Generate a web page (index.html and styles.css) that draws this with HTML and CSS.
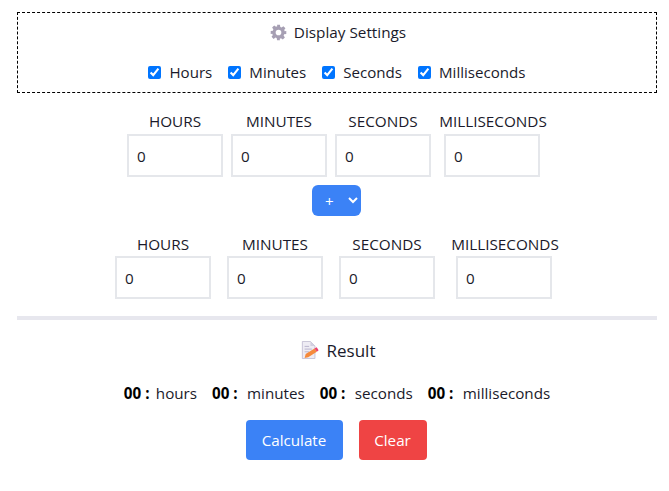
FILE: index.html
```html
<!DOCTYPE html>
<html lang="en">
<head>
<meta charset="utf-8">
<title>Time Calculator</title>
<link rel="stylesheet" href="styles.css">
</head>
<body>
<main class="page">
  <section class="settings">
    <h2 class="settings-title">
      <svg class="gear" viewBox="0 0 24 24" aria-hidden="true"><path fill="#a69fb3" fill-rule="evenodd" d="M10 1h4l.6 3.1c.6.2 1.2.4 1.7.7l2.6-1.8 2.9 2.9-1.8 2.6c.3.5.6 1.1.7 1.7L23 10v4l-3.1.6c-.2.6-.4 1.2-.7 1.7l1.8 2.6-2.9 2.9-2.6-1.8c-.5.3-1.1.6-1.7.7L14 23h-4l-.6-3.1c-.6-.2-1.2-.4-1.7-.7l-2.6 1.8-2.9-2.9 1.8-2.6c-.3-.5-.6-1.1-.7-1.7L1 14v-4l3.1-.6c.2-.6.4-1.2.7-1.7L3 5.1 5.9 2.2l2.6 1.8c.5-.3 1.1-.6 1.7-.7L10 1zm2 7a4 4 0 1 0 0 8 4 4 0 0 0 0-8z"/></svg>
      <span>Display Settings</span>
    </h2>
    <div class="toggles">
      <label class="toggle"><input type="checkbox" checked>Hours</label>
      <label class="toggle"><input type="checkbox" checked>Minutes</label>
      <label class="toggle"><input type="checkbox" checked>Seconds</label>
      <label class="toggle"><input type="checkbox" checked>Milliseconds</label>
    </div>
  </section>

  <div class="time-row narrow">
    <label class="field"><span>HOURS</span><input type="text" value="0"></label>
    <label class="field"><span>MINUTES</span><input type="text" value="0"></label>
    <label class="field"><span>SECONDS</span><input type="text" value="0"></label>
    <label class="field wide"><span>MILLISECONDS</span><input type="text" value="0"></label>
  </div>

  <div class="operator">
    <select class="op-select"><option>+</option><option>-</option></select>
  </div>

  <div class="time-row roomy">
    <label class="field"><span>HOURS</span><input type="text" value="0"></label>
    <label class="field"><span>MINUTES</span><input type="text" value="0"></label>
    <label class="field"><span>SECONDS</span><input type="text" value="0"></label>
    <label class="field wide"><span>MILLISECONDS</span><input type="text" value="0"></label>
  </div>

  <hr class="divider">

  <h2 class="result-title">
    <svg class="memo" viewBox="0 0 20 20" aria-hidden="true">
      <path fill="#eeecf4" stroke="#c3bfd4" stroke-width="1" d="M1.5.5h9l5 5v14h-14z"/>
      <path fill="#d3cfe0" d="M10.5.5v5h5z"/>
      <path stroke="#b4afc8" stroke-width="1" d="M4 6h5M4 9h8M4 12h5"/>
      <path fill="#f58a3c" d="M4 19l1.2-4.6L15 8.4l2.6 3.6L8 18z"/>
      <path fill="#ee3f6c" d="M15 8.4l2.4-1.5 2.2 3.4-2 1.7z"/>
    </svg>
    <span>Result</span>
  </h2>

  <p class="result-line">
    <b>00 :</b><span class="unit first">hours</span>
    <b>00 :</b><span class="unit">minutes</span>
    <b>00 :</b><span class="unit">seconds</span>
    <b>00 :</b><span class="unit">milliseconds</span>
  </p>

  <div class="actions">
    <button class="btn blue" type="button">Calculate</button>
    <button class="btn red" type="button">Clear</button>
  </div>
</main>
</body>
</html>
```
FILE: styles.css
```css
* { box-sizing: border-box; }
html, body { margin: 0; padding: 0; background: #fff; }
body {
  font-family: "Open Sans", "Noto Sans", "Liberation Sans", sans-serif;
  font-size: 15.2px;
  color: #1a1a2a;
  overflow: hidden;
}
.page {
  padding: 12px 12px 0 17px;
  display: flex;
  flex-direction: column;
}
.settings {
  height: 81px;
  border: 1px dashed #000;
  display: flex;
  flex-direction: column;
  align-items: center;
}
.settings-title {
  margin: 8px 0 0;
  padding-left: 2px;
  height: 22px;
  font-size: 15.3px;
  font-weight: 400;
  display: flex;
  align-items: center;
  gap: 7px;
}
.gear { width: 17px; height: 17px; }
.toggles {
  margin-top: 18px;
  display: flex;
  gap: 16px;
  font-size: 15.1px;
}
.toggle {
  display: flex;
  align-items: center;
  height: 22px;
}
.toggle input {
  width: 13px;
  height: 13px;
  margin: 0 8px 0 0;
  accent-color: #0075ff;
}
.time-row {
  display: flex;
  justify-content: center;
}
.narrow { margin-top: 17px; gap: 8px; }
.roomy { margin-top: 17px; gap: 16px; }
.field {
  width: 96px;
  display: flex;
  flex-direction: column;
  align-items: center;
}
.field.wide { width: 108px; }
.wide input { margin-right: 2px; }
.field span {
  height: 22px;
  line-height: 22px;
  font-size: 15.3px;
  white-space: nowrap;
}
.narrow input { margin-top: 2px; }
.roomy input { margin-top: 1px; }
.field input {
  width: 96px;
  height: 43px;
  border: 2px solid #e5e7eb;
  padding: 0 8px;
  font: inherit;
  color: inherit;
  outline: none;
  background: #fff;
}
.operator {
  margin-top: 8px;
  display: flex;
  justify-content: center;
}
.op-select {
  width: 49px;
  height: 31px;
  margin-right: 1px;
  border: 0;
  border-radius: 6px;
  background-color: #3b82f6;
  color: #fff;
  font: inherit;
  padding: 0 0 0 9px;
}
.divider {
  width: 100%;
  height: 4px;
  margin: 17px 0 0;
  border: 0;
  background: #e7e7ee;
}
.result-title {
  margin: 18px 0 0;
  padding-left: 2px;
  height: 24px;
  font-size: 17px;
  font-weight: 400;
  display: flex;
  justify-content: center;
  align-items: center;
  gap: 8px;
}
.memo { width: 18px; height: 18px; }
.result-line {
  margin: 20px 0 0;
  height: 22px;
  line-height: 22px;
  display: flex;
  justify-content: center;
  white-space: nowrap;
}
.result-line b { color: #000; font-weight: 700; width: 28px; }
.unit { margin: 0 15px 0 7px; }
.unit.first { margin-left: 4px; }
.result-line .unit:last-child { margin-right: 0; }
.actions {
  margin-top: 16px;
  padding-right: 2px;
  display: flex;
  justify-content: center;
  gap: 16px;
}
.btn {
  height: 40px;
  border: 0;
  border-radius: 4px;
  padding: 0;
  color: #fff;
  font: inherit;
}
.blue { background: #3b82f6; width: 97px; }
.red { background: #ef4444; width: 68px; }
```
